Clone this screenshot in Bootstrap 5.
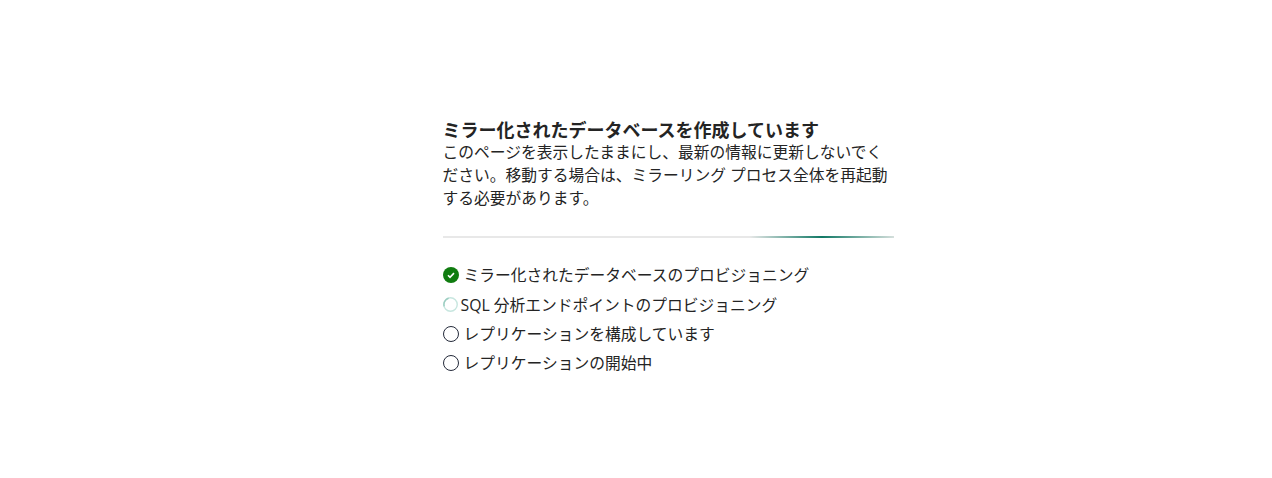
<!doctype html>
<html lang="ja"><head><meta charset="utf-8"><title>Mirror</title>
<link href="https://cdn.jsdelivr.net/npm/bootstrap@5.3.0/dist/css/bootstrap.min.css" rel="stylesheet">
<style>
html,body{height:100%;background:#fff}
body{font-family:"Open Sans","Noto Sans CJK JP",sans-serif;color:#242424}
.shiftbox{padding-left:64px}
.wrapbox{width:451px;margin-top:117px}
.ttl{font-size:18px;font-weight:700;line-height:24px;margin:0;font-family:"Noto Sans CJK JP",sans-serif}
.desc{font-size:15.75px;line-height:23px;margin:0;width:451px}
.rule{height:2px;margin:26px 0 22px;background:linear-gradient(90deg,#e8e8e8 0 68%,#117865 84%,#d5dfdc 100%)}
.stp{font-size:15.75px;line-height:22px;height:29px;gap:5px}
.stp-first{margin-bottom:1px}
.stp svg{flex:none}
.stp-spin{gap:3px}
</style></head><body>
<div class="shiftbox d-flex justify-content-center"><div class="wrapbox">
<h1 class="ttl">ミラー化されたデータベースを作成しています</h1>
<p class="desc">このページを表示したままにし、最新の情報に更新しないでください。移動する場合は、ミラーリング プロセス全体を再起動する必要があります。</p>
<div class="rule"></div>
<div class="d-flex flex-column">
<div class="stp stp-first d-flex align-items-center"><svg width="16" height="16" viewBox="0 0 16 16"><circle cx="8" cy="8" r="8" fill="#107c10"/><path d="M5 8.3l2 2 4-4.2" fill="none" stroke="#fff" stroke-width="1.6"/></svg><span>ミラー化されたデータベースのプロビジョニング</span></div>
<div class="stp stp-spin d-flex align-items-center"><svg width="15" height="15" viewBox="0 0 16 16"><circle cx="8" cy="8" r="7.2" fill="none" stroke="#c7e6df" stroke-width="1.5"/><path d="M1.3 10A7 7 0 0 1 6 1.3" fill="none" stroke="#9ccdc1" stroke-width="1.5"/></svg><span>SQL 分析エンドポイントのプロビジョニング</span></div>
<div class="stp d-flex align-items-center"><svg width="16" height="16" viewBox="0 0 16 16"><circle cx="8" cy="8" r="7.5" fill="none" stroke="#242a3a" stroke-width="1"/></svg><span>レプリケーションを構成しています</span></div>
<div class="stp d-flex align-items-center"><svg width="16" height="16" viewBox="0 0 16 16"><circle cx="8" cy="8" r="7.5" fill="none" stroke="#242a3a" stroke-width="1"/></svg><span>レプリケーションの開始中</span></div>
</div>
</div></div>
<script src="https://cdn.jsdelivr.net/npm/bootstrap@5.3.0/dist/js/bootstrap.bundle.min.js"></script>
</body></html>
